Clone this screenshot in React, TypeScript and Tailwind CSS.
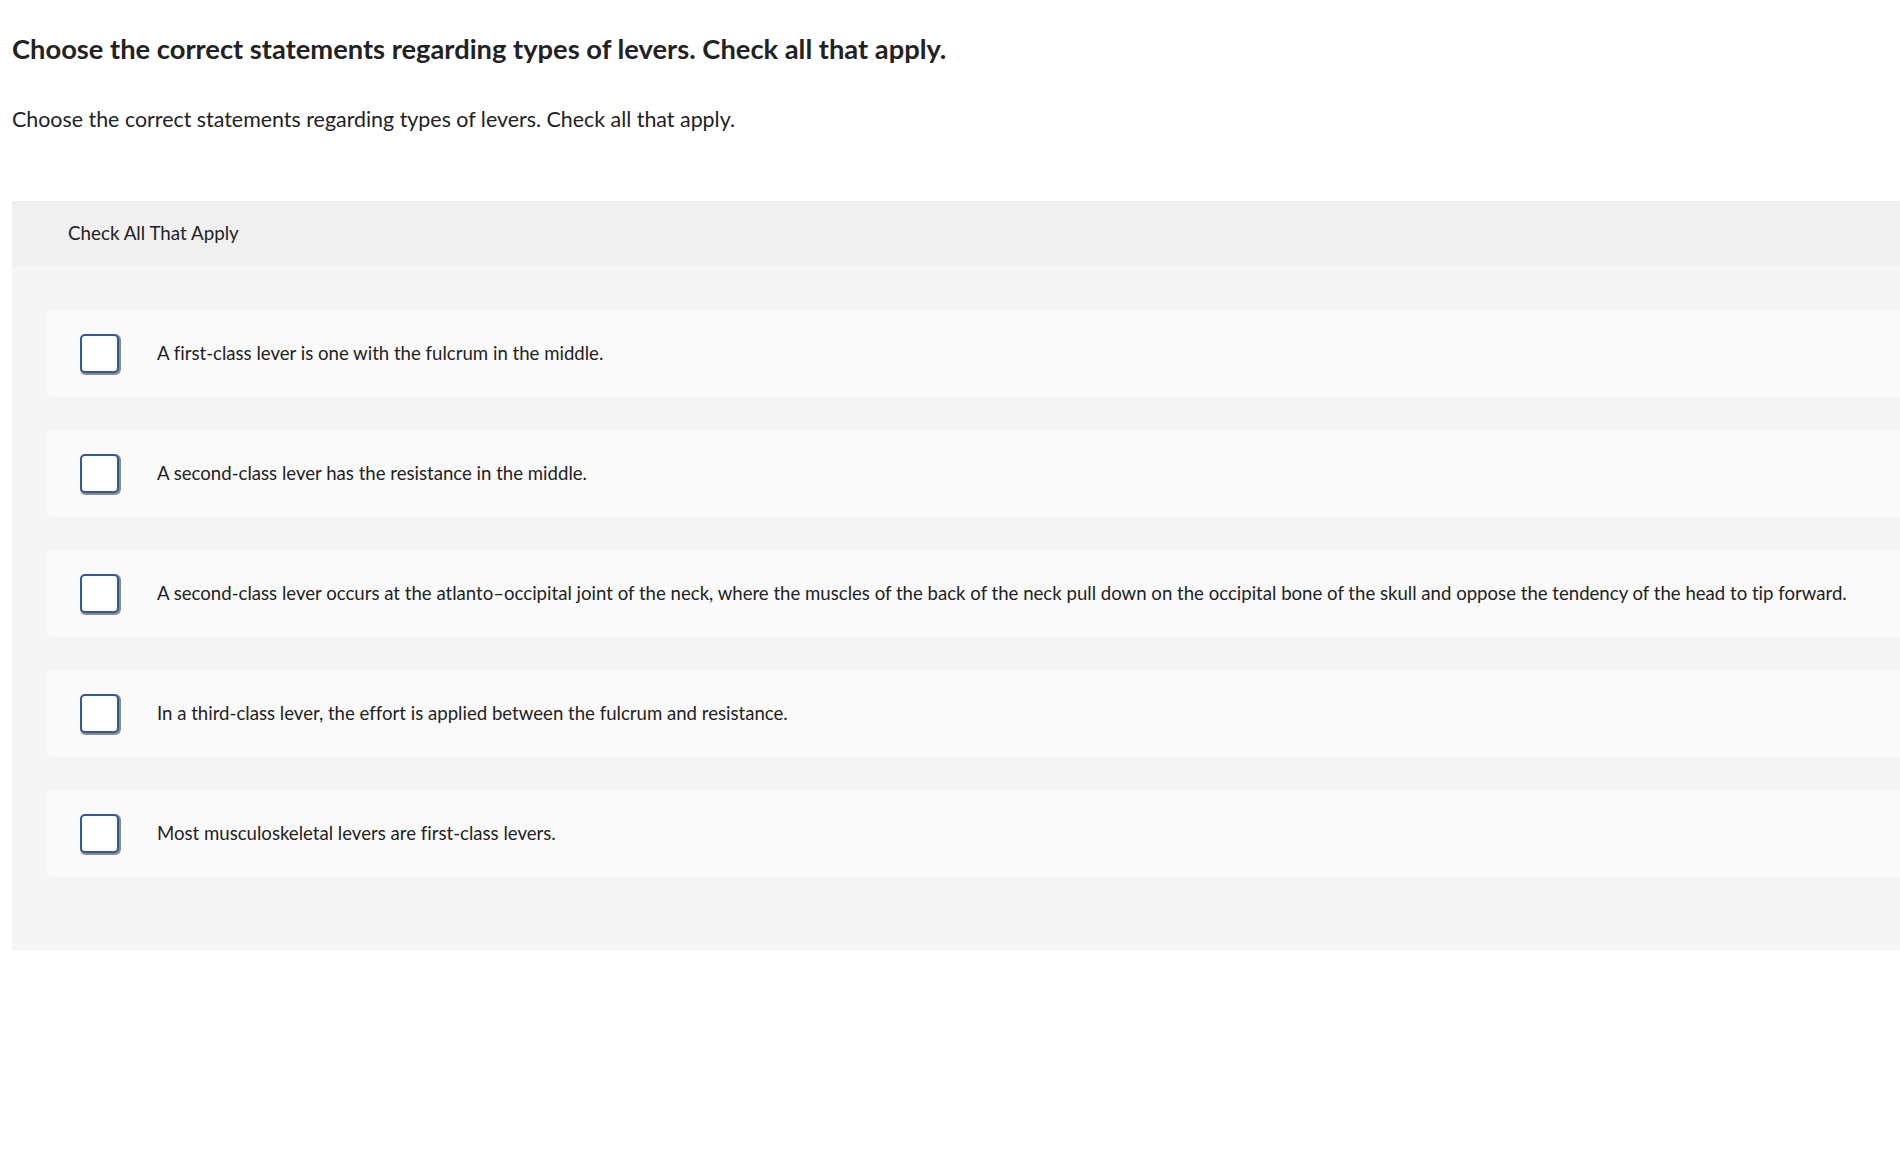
const statements: string[] = [
  'A first-class lever is one with the fulcrum in the middle.',
  'A second-class lever has the resistance in the middle.',
  'A second-class lever occurs at the atlanto\u2013occipital joint of the neck, where the muscles of the back of the neck pull down on the occipital bone of the skull and oppose the tendency of the head to tip forward.',
  'In a third-class lever, the effort is applied between the fulcrum and resistance.',
  'Most musculoskeletal levers are first-class levers.',
];

const Checkbox = () => (
  <span className="block h-[39px] w-[39px] shrink-0 rounded-[5px] border-[2.5px] border-[#2f5b94] bg-white shadow-[1px_1px_0_1px_#8a8a8a]" />
);

export default function App() {
  return (
    <div className="min-h-screen w-full overflow-hidden bg-white pl-[12px] font-['Lato',sans-serif] text-[#222] [font-variant-ligatures:none]">
      <h1 className="pt-[31px] text-[27.3px] font-bold leading-[36px] text-[#222]">
        Choose the correct statements regarding types of levers. Check all that apply.
      </h1>
      <p className="mt-[38px] text-[21.4px] leading-[28px]">
        Choose the correct statements regarding types of levers. Check all that apply.
      </p>

      <div className="mt-[68px] bg-[#f5f5f5]">
        <div className="flex h-[65px] items-center bg-[#f0f0f0] pl-[56px] text-[18.8px]">
          Check All That Apply
        </div>
        <div className="flex flex-col gap-[33px] pb-[73px] pl-[35px] pt-[44px]">
          {statements.map((s) => (
            <label
              key={s}
              className="flex h-[87px] items-center rounded-l-[3px] bg-[#fafafa] pl-[33px]"
            >
              <Checkbox />
              <span className="ml-[38px] whitespace-nowrap text-[18.6px]">{s}</span>
            </label>
          ))}
        </div>
      </div>
    </div>
  );
}
